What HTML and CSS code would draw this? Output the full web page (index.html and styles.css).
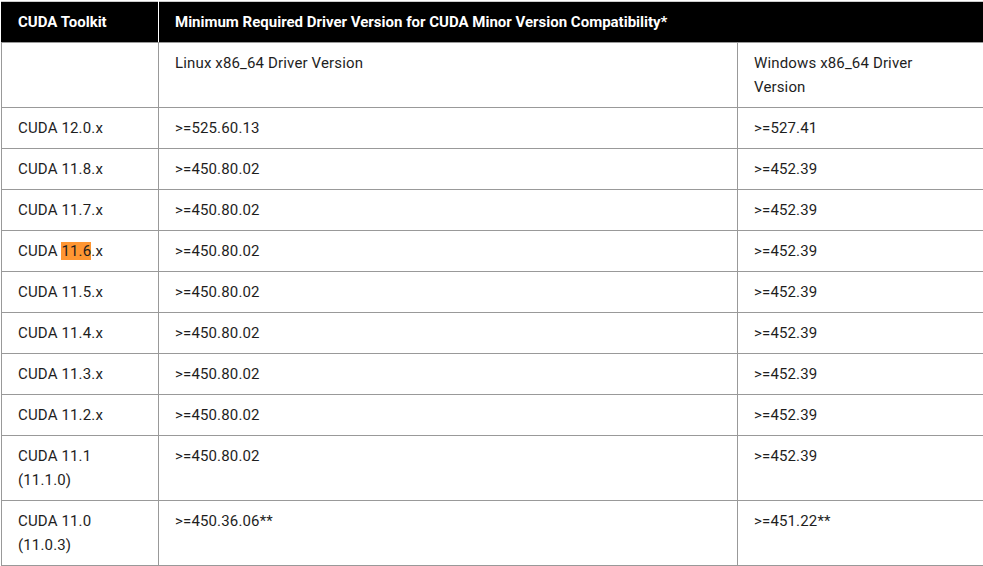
FILE: index.html
```html
<!DOCTYPE html>
<html>
<head>
<meta charset="utf-8">
<link rel="stylesheet" href="styles.css">
</head>
<body>
<div class="wrap">
<table class="compat">
  <colgroup>
    <col class="c1">
    <col class="c2">
    <col class="c3">
  </colgroup>
  <thead>
    <tr>
      <th>CUDA Toolkit</th>
      <th colspan="2">Minimum Required Driver Version for CUDA Minor Version Compatibility*</th>
    </tr>
  </thead>
  <tbody>
    <tr>
      <td></td>
      <td>Linux x86_64 Driver Version</td>
      <td><span class="narrow">Windows x86_64 Driver Version</span></td>
    </tr>
    <tr><td>CUDA 12.0.x</td><td>&gt;=525.60.13</td><td>&gt;=527.41</td></tr>
    <tr><td>CUDA 11.8.x</td><td>&gt;=450.80.02</td><td>&gt;=452.39</td></tr>
    <tr><td>CUDA 11.7.x</td><td>&gt;=450.80.02</td><td>&gt;=452.39</td></tr>
    <tr><td>CUDA <mark class="hit">11.6</mark>.x</td><td>&gt;=450.80.02</td><td>&gt;=452.39</td></tr>
    <tr><td>CUDA 11.5.x</td><td>&gt;=450.80.02</td><td>&gt;=452.39</td></tr>
    <tr><td>CUDA 11.4.x</td><td>&gt;=450.80.02</td><td>&gt;=452.39</td></tr>
    <tr><td>CUDA 11.3.x</td><td>&gt;=450.80.02</td><td>&gt;=452.39</td></tr>
    <tr><td>CUDA 11.2.x</td><td>&gt;=450.80.02</td><td>&gt;=452.39</td></tr>
    <tr><td>CUDA 11.1<br>(11.1.0)</td><td>&gt;=450.80.02</td><td>&gt;=452.39</td></tr>
    <tr><td>CUDA 11.0<br>(11.0.3)</td><td>&gt;=450.36.06**</td><td>&gt;=451.22**</td></tr>
  </tbody>
</table>
</div>
</body>
</html>
```
FILE: styles.css
```css
html, body {
  margin: 0;
  padding: 0;
  background: #ffffff;
}

.wrap {
  padding: 1px 0 0 1px;
}

.compat {
  border-collapse: collapse;
  table-layout: fixed;
  width: 982px;
  font-family: Roboto, "Liberation Sans", sans-serif;
  font-size: 15px;
  letter-spacing: 0.15px;
  line-height: 24px;
  color: #1e1e1e;
}

.c1 { width: 157px; }
.c2 { width: 579px; }
.c3 { width: 246px; }

.compat th {
  background: #000000;
  color: #ffffff;
  font-weight: 700;
  font-size: 15px;
  letter-spacing: 0;
  text-align: left;
  vertical-align: top;
  padding: 8px 16px;
  border: 1px solid #ffffff;
  border-top-color: #cccccc;
  border-bottom-color: #999999;
}

.compat th:first-child {
  border-left-color: #000000;
}

.compat th:last-child {
  border-right-color: #999999;
}

.compat td {
  vertical-align: top;
  padding: 8px 16px;
  border: 1px solid #999999;
}

.narrow {
  display: block;
  max-width: 190px;
}

.hit {
  background: #ff9632;
  color: inherit;
}
```
